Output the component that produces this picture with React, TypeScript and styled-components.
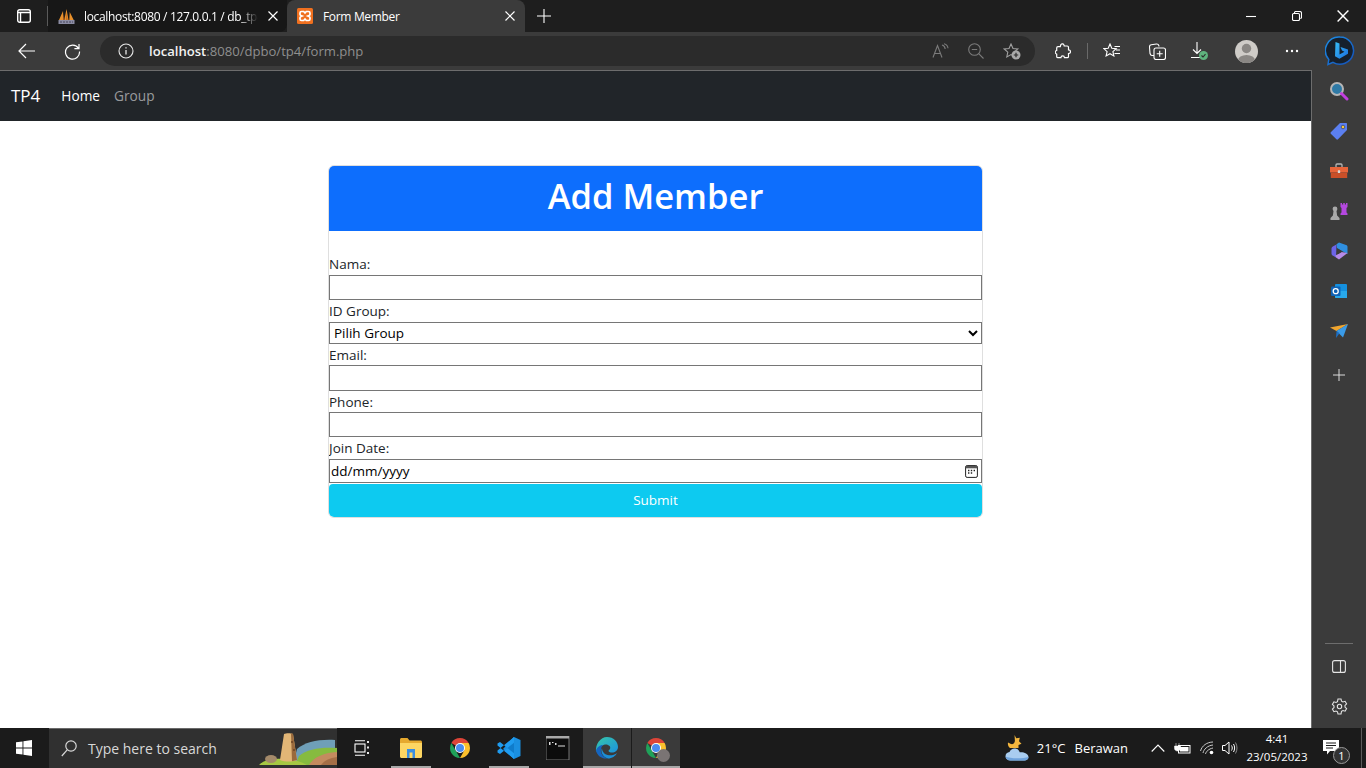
import React from "react";
import styled, { createGlobalStyle } from "styled-components";

const GlobalStyle = createGlobalStyle`
	html, body {
		margin: 0;
		padding: 0;
		height: 100%;
		overflow: hidden;
		background: #1c1c1c;
	}
	* {
		box-sizing: border-box;
	}
	body {
		font-family: "Open Sans", "Noto Sans", "Liberation Sans", sans-serif;
	}
`;

const line = { fill: "none", stroke: "currentColor", strokeWidth: 1.1 };

const PanelIcon = () => (
	<svg width="16" height="16" viewBox="0 0 16 16" {...line} strokeWidth={1.4}>
		<rect x="1.700" y="1.700" width="12.600" height="12.600" rx="2" />
		<path d="M1.700 4.500h12.600M4.500 4.500v9.800" />
	</svg>
);
const PmaIcon = () => (
	<svg width="17" height="17" viewBox="0 0 17 17">
		<path d="M1 12 5 3l.5 9zM6.300 12 8.500 1l2 11zM11.300 12l.4-8 4 8z" fill="#e8912c" />
		<path d="M5 12 6 6l.4 6zM8.300 12 8.500 4l1 8z" fill="#b9601a" />
		<rect x="0.500" y="12" width="16" height="4" fill="#8b8ca3" />
		<path d="M2 14h13" stroke="#44455a" strokeWidth="1" strokeDasharray="2 1" />
	</svg>
);
const XamppIcon = () => (
	<svg width="16" height="16" viewBox="0 0 16 16">
		<rect width="16" height="16" rx="1.500" fill="#f0701f" />
		<path
			d="M4.500 3.500h2.200L8 5l1.300-1.500h2.200c1 0 1.500.6 1.500 1.500v1.200c0 .6-.4 1-1 1.300l-1.200.5 1.200.5c.6.300 1 .7 1 1.300V11c0 .9-.5 1.500-1.500 1.500H9.300L8 11l-1.300 1.500H4.500C3.500 12.500 3 11.900 3 11V9.800c0-.6.4-1 1-1.300L5.200 8 4 7.500c-.6-.3-1-.7-1-1.300V5c0-.9.500-1.500 1.500-1.500z"
			fill="none"
			stroke="#fff"
			strokeWidth="1.700"
		/>
	</svg>
);
const CloseIcon = ({ size = 10 }: { size?: number }) => (
	<svg width={size} height={size} viewBox="0 0 10 10" {...line} strokeWidth={1.2}>
		<path d="M.5.500l9 9M9.500.500l-9 9" />
	</svg>
);
const PlusIcon = ({ size = 14 }: { size?: number }) => (
	<svg width={size} height={size} viewBox="0 0 14 14" {...line}>
		<path d="M7 0v14M0 7h14" />
	</svg>
);
const MinIcon = () => (
	<svg width="10" height="10" viewBox="0 0 10 10" {...line}>
		<path d="M0 5.500h10" />
	</svg>
);
const RestoreIcon = () => (
	<svg width="10" height="10" viewBox="0 0 10 10" {...line}>
		<rect x=".5" y="2.500" width="7" height="7" rx="1.200" />
		<path d="M2.500 2.500V1.700C2.500 1 3 .5 3.700 .5h4.100C8.800.5 9.500 1.200 9.500 2.200v4.100c0 .7-.5 1.200-1.200 1.200" />
	</svg>
);
const BackIcon = () => (
	<svg width="18" height="16" viewBox="0 0 18 16" {...line} strokeWidth={1.2}>
		<path d="M1 8h16M8 1 1 8l7 7" />
	</svg>
);
const RefreshIcon = () => (
	<svg width="17" height="17" viewBox="0 0 17 17" {...line} strokeWidth={1.2}>
		<path d="M14.500 5.500A7 7 0 1 0 15.500 8.500M15 1v4.600h-4.600" />
	</svg>
);
const InfoIcon = () => (
	<svg width="16" height="16" viewBox="0 0 16 16" {...line}>
		<circle cx="8" cy="8" r="7" />
		<path d="M8 7v4.500M8 4.300v1.200" strokeWidth="1.300" />
	</svg>
);
const ReadIcon = () => (
	<svg width="17" height="16" viewBox="0 0 17 16" {...line} stroke="#7b7b7b">
		<path d="M1 14.500 5.500 2.500 10 14.500M2.500 10.500h6M10 2c2 .5 3 2 3.200 4M12 .8c2.200.6 3.800 2.400 4 4.500" />
	</svg>
);
const ZoomOutIcon = () => (
	<svg width="16" height="16" viewBox="0 0 16 16" {...line} stroke="#7b7b7b">
		<circle cx="6.500" cy="6.500" r="5.800" />
		<path d="M3.800 6.500h5.400M10.700 10.700l4.800 4.800" />
	</svg>
);
const StarAddIcon = () => (
	<svg width="18" height="17" viewBox="0 0 18 17">
		<path
			d="M8 1l2 4.500 4.800.5-3.600 3.200 1 4.800L8 11.600 3.800 14l1-4.800L1.200 6 6 5.500z"
			fill="none"
			stroke="#a0a0a0"
			strokeWidth="1.100"
		/>
		<circle cx="13" cy="12" r="4.500" fill="#a9a9a9" />
		<path d="M13 9.800v4.400M10.800 12h4.400" stroke="#2b2b2b" strokeWidth="1.200" />
	</svg>
);
const PuzzleIcon = () => (
	<svg width="16" height="16" viewBox="0 0 16 16" {...line} strokeWidth={1.2}>
		<path d="M6 1.500c.8-1 2.600-.7 3 .7l.2.800h3c.8 0 1.300.5 1.300 1.300v2.500c1.500 0 2 1 2 1.900s-.7 1.800-2 1.800v2.900c0 .8-.5 1.300-1.300 1.300H9.500c-.1-1.300-.8-1.900-1.800-1.900s-1.700.7-1.800 1.900H3c-.8 0-1.300-.5-1.300-1.300v-2.200C.3 10.500 0 9.300.5 8.300c.3-.6.700-.8 1.200-.9V5c0-.8.500-1.300 1.300-1.300h2.300c.1-.9.200-1.600.7-2.200z" />
	</svg>
);
const FavListIcon = () => (
	<svg width="18" height="16" viewBox="0 0 18 16" {...line}>
		<path d="M7 1l1.800 4.200 4.400.4-3.300 3 1 4.400L7 10.700 3.100 13l1-4.400-3.300-3 4.400-.4zM11.500 3.500H17M13 7h4M11.500 10.500H17" />
	</svg>
);
const CollectionsIcon = () => (
	<svg width="17" height="17" viewBox="0 0 17 17" {...line}>
		<path d="M5 12.500H3C1.800 12.500 1.300 11.700 1 10.500L.5 4C.4 2.800 1 2 2.200 1.800L7.500 1c1.200-.1 2 .4 2.300 1.500l.2 1" />
		<rect x="5" y="5" width="11.500" height="11.500" rx="2" />
		<path d="M10.700 7.700v6M7.700 10.700h6" />
	</svg>
);
const DownloadIcon = () => (
	<svg width="18" height="18" viewBox="0 0 18 18">
		<path d="M6 0v11M2 7.500l4 4 4-4M0 15.500h11" fill="none" stroke="#fff" strokeWidth="1.100" />
		<circle cx="12.500" cy="13.500" r="4.500" fill="#5fb37e" />
		<path d="M10.500 13.500l1.500 1.500 2.500-2.800" fill="none" stroke="#2b2b2b" strokeWidth="1.100" />
	</svg>
);
const AvatarIcon = () => (
	<svg width="23" height="23" viewBox="0 0 23 23">
		<defs>
			<clipPath id="avatar-clip">
				<circle cx="11.500" cy="11.500" r="11.500" />
			</clipPath>
		</defs>
		<g clipPath="url(#avatar-clip)">
			<rect width="23" height="23" fill="#cfccc8" />
			<circle cx="11.500" cy="8.500" r="4.700" fill="#8a8784" />
			<ellipse cx="11.500" cy="20.500" rx="8.500" ry="5.500" fill="#8a8784" />
		</g>
	</svg>
);
const MoreIcon = () => (
	<svg width="14" height="4" viewBox="0 0 14 4" fill="#fff">
		<circle cx="2" cy="2" r="1.200" />
		<circle cx="7" cy="2" r="1.200" />
		<circle cx="12" cy="2" r="1.200" />
	</svg>
);
const BingIcon = () => (
	<svg width="30" height="30" viewBox="0 0 30 30">
		<defs>
			<linearGradient id="bing-ring" x1="0" y1="0" x2="1" y2="1">
				<stop offset="0" stopColor="#1c8fe8" />
				<stop offset="1" stopColor="#1450b8" />
			</linearGradient>
			<linearGradient id="bing-b" x1="0" y1="0" x2="1" y2="1">
				<stop offset="0" stopColor="#37bdf5" />
				<stop offset="1" stopColor="#1a6fe0" />
			</linearGradient>
		</defs>
		<path
			d="M15 1a13.600 13.600 0 1 1-7 25.300L3 28.500l.8-5A13.600 13.600 0 0 1 15 1z"
			fill="#16202c"
			stroke="url(#bing-ring)"
			strokeWidth="1.500"
		/>
		<path d="M10.500 6l4 1.400v11l5-2.700-2.500-1.200-1.500-3.600 7.500 2.600v4.300l-8.600 5-4.400-2.500z" fill="url(#bing-b)" />
	</svg>
);

const SearchGem = () => (
	<svg width="20" height="20" viewBox="0 0 20 20">
		<circle cx="8" cy="8" r="6" fill="#2f7aa6" stroke="#b6b6b6" strokeWidth="2" />
		<path d="M12.500 12.500 18 18" stroke="#c23ee0" strokeWidth="3" strokeLinecap="round" />
	</svg>
);
const TagIcon = () => (
	<svg width="18" height="18" viewBox="0 0 18 18">
		<path d="M10 1h6c.6 0 1 .4 1 1v6l-9 9.300c-.5.500-1.100.5-1.600 0L.8 11.800c-.5-.5-.5-1.100 0-1.600z" fill="#5b7ff0" />
		<circle cx="13" cy="5" r="1.800" fill="#f4c93b" stroke="#2d3a70" strokeWidth=".7" />
	</svg>
);
const ToolboxIcon = () => (
	<svg width="18" height="16" viewBox="0 0 18 16">
		<path d="M6 4V2c0-.6.4-1 1-1h4c.6 0 1 .4 1 1v2" fill="none" stroke="#b5b5b5" strokeWidth="1.300" />
		<rect y="4" width="18" height="5.500" fill="#e8653a" />
		<rect x=".8" y="9.500" width="16.400" height="5.500" fill="#c94f28" />
		<rect x="7.800" y="7.300" width="2.400" height="2.800" rx=".6" fill="#d9d9d9" />
	</svg>
);
const ChessIcon = () => (
	<svg width="18" height="18" viewBox="0 0 18 18">
		<path d="M10.500 1h1.500v1.500h1.200V1h1.600v1.500H16V1h1.500v4l-1 1v4.500l1 1V13h-7v-1.500l1-1V6l-1-1z" fill="#b548e0" />
		<circle cx="5" cy="7" r="2.400" fill="#a9a9a9" />
		<path d="M3.500 9h3l.6 4.500L9.500 16v2h-9v-2l2.400-2.500z" fill="#a9a9a9" />
	</svg>
);
const CopilotIcon = () => (
	<svg width="17" height="18" viewBox="0 0 17 18">
		<path d="M8 .5 15 3c1 .4 1.500 1 1.500 2v7L11 9 6 6l-.5-3.700z" fill="#2f8fe0" />
		<path d="M5.500 2.500 1.800 4.500C1 5 .5 5.700.5 6.600v5c0 .9.400 1.600 1.200 2L5 15.500z" fill="#6d63e8" />
		<path d="M16.500 11 8 17.500 5 15.500l-.5-2 6-3.500z" fill="#b58ae8" />
		<path d="M6.500 6.500l5 3-5 3z" fill="#3b3b3b" />
	</svg>
);
const OutlookIcon = () => (
	<svg width="16" height="16" viewBox="0 0 16 16">
		<rect x="4" y="1" width="12" height="14" rx="1" fill="#1490df" />
		<path d="M4 8h12v7H5a1 1 0 0 1-1-1z" fill="#28a8ea" />
		<rect x="0" y="3.500" width="9.500" height="9.500" rx="1" fill="#0f62b5" />
		<circle cx="4.700" cy="8.200" r="2.500" fill="none" stroke="#fff" strokeWidth="1.300" />
	</svg>
);
const SendIcon = () => (
	<svg width="18" height="16" viewBox="0 0 18 16">
		<path d="M0 4.500 18 1 6.500 8z" fill="#f0a52f" />
		<path d="M18 1 13 14.500 6.500 8z" fill="#3a9be8" />
		<path d="M6.500 8 6 15l3.500-4.700z" fill="#1c6fc4" />
	</svg>
);
const SplitIcon = () => (
	<svg width="14" height="13" viewBox="0 0 14 13" {...line}>
		<rect x=".6" y=".6" width="12.800" height="11.800" rx="2" />
		<path d="M8.500.6v11.800" />
	</svg>
);
const GearIcon = () => (
	<svg width="17" height="17" viewBox="0 0 17 17" {...line}>
		<path d="M7 1h3l.5 2.200 1.500.8 2.100-.7 1.500 2.600-1.600 1.500v1.700l1.600 1.500-1.500 2.600-2.100-.7-1.500.8L10 16H7l-.5-2.200-1.500-.8-2.100.7L1.400 11.100 3 9.600V7.900L1.400 6.400l1.500-2.600 2.100.7 1.500-.8z" />
		<circle cx="8.500" cy="8.500" r="2.200" />
	</svg>
);
const CalendarIcon = () => (
	<svg width="13" height="13" viewBox="0 0 13 13">
		<rect x=".6" y=".6" width="11.800" height="11.800" rx="1.500" fill="none" stroke="#222" strokeWidth="1" />
		<rect x="1" y="1" width="11" height="2.300" fill="#555" />
		<path d="M3 5.500h1.400M5.800 5.500h1.400M8.600 5.500H10M3 8h1.400M5.800 8h1.400" stroke="#222" strokeWidth="1.300" />
	</svg>
);

const WindowsIcon = () => (
	<svg width="16" height="16" viewBox="0 0 16 16" fill="#fff">
		<path d="M0 2.300 6.500 1.400v6.100H0zM7.400 1.300 16 0v7.500H7.400zM0 8.500h6.500v6.100L0 13.700zM7.400 8.500H16V16l-8.600-1.300z" />
	</svg>
);
const LensIcon = () => (
	<svg width="16" height="17" viewBox="0 0 16 17" {...line} strokeWidth={1.2}>
		<circle cx="10" cy="6" r="5.200" />
		<path d="M6.200 9.800.8 16" />
	</svg>
);
const SearchArt = () => (
	<svg width="78" height="33" viewBox="0 0 78 33">
		<path d="M38 17c8-7 22-10 38-9v25H34z" fill="#6f9fb8" />
		<path d="M40 24c8-7 22-9 38-8v17H36z" fill="#86bb3f" />
		<path d="M0 33c4-4 10-6 16-6 10-1 24 1 32 6z" fill="#a6c843" />
		<path d="M50 33c4-7 13-12 28-13v13z" fill="#c48b5f" />
		<path d="M62 33c3-4 8-7 16-8v8z" fill="#a56f47" />
		<path d="M25 2c2-1 7-1 9 0l4 26c-5 2-12 2-17 0z" fill="#e2b676" />
		<path d="M32 1.500c1 0 1.500 0 2 .5l4 26-5 1.300z" fill="#9a6a3c" />
		<circle cx="33" cy="10" r="1" fill="#6c4523" />
		<circle cx="35" cy="18" r="1" fill="#6c4523" />
		<ellipse cx="12" cy="27" rx="6" ry="4" fill="#a48a6a" />
	</svg>
);
const TaskViewIcon = () => (
	<svg width="16" height="16" viewBox="0 0 16 16" {...line}>
		<path d="M1 .8h10M1 15.200h10" />
		<rect x="1" y="4" width="10" height="8" />
		<path d="M14 1v2M14 6.500v2M14 12v2" strokeWidth="1.800" />
	</svg>
);
const FolderIcon = () => (
	<svg width="22" height="20" viewBox="0 0 22 20">
		<path d="M0 1.500C0 .7.700 0 1.500 0h6l2 2.500h11c.8 0 1.500.7 1.500 1.500v2H0z" fill="#e6a92e" />
		<path d="M0 5h22v13.500c0 .8-.7 1.500-1.500 1.500h-19C.7 20 0 19.300 0 18.500z" fill="#fdd663" />
		<rect x="7" y="11" width="8" height="9" fill="#3a8ee0" />
		<rect x="9.500" y="14.500" width="3" height="5.500" fill="#fdd663" />
	</svg>
);
const ChromeIcon = ({ size = 24 }: { size?: number }) => (
	<svg width={size} height={size} viewBox="0 0 24 24">
		<path d="M3.340 7A10 10 0 0 1 20.660 7H12a5 5 0 0 0-4.330 2.500z" fill="#dd4438" />
		<path d="M3.340 7 7.670 14.500 12 22A10 10 0 0 1 3.340 7z" fill="#1fa25a" />
		<path d="M20.660 7H12l4.330 7.500L12 22A10 10 0 0 0 20.660 7z" fill="#fbc02d" />
		<circle cx="12" cy="12" r="5" fill="#fff" />
		<circle cx="12" cy="12" r="4" fill="#4a8cf0" />
	</svg>
);
const VsCodeIcon = () => (
	<svg width="24" height="24" viewBox="0 0 24 24">
		<path d="M17 1 23.500 4v16L17 23 6 13z" fill="#1a8fe0" />
		<path d="M17 1v22L10 15.500V8.500z" fill="#0f7ccb" />
		<path d="M.5 7.500 3 6l14 11.200V23L.5 9.500zM.5 16.500 3 18 17 6.800V1L.5 14.500z" fill="#1f9cf0" />
	</svg>
);
const CmdIcon = () => (
	<svg width="24" height="24" viewBox="0 0 24 24">
		<rect x="0" y="0" width="23" height="24" fill="#0c0c0c" stroke="#777" strokeWidth="1" />
		<rect x="0" y="0" width="23" height="2.500" fill="#aaa" />
		<path d="M3 6h1.500v3H3zM6 6h1.500v1H6zM9 7h1.500v2H9zM12 9.500h7v1h-7z" fill="#ddd" />
	</svg>
);
const EdgeIcon = () => (
	<svg width="24" height="24" viewBox="0 0 24 24">
		<defs>
			<linearGradient id="edge-a" x1="0" y1="0" x2="1" y2="1">
				<stop offset="0" stopColor="#37c7a8" />
				<stop offset="1" stopColor="#1b92df" />
			</linearGradient>
		</defs>
		<path
			d="M12 1c6.500 0 11 4.800 11 10 0 3.500-3 5.500-6 5.500-2 0-3.500-.6-3.500-1.500 0-.5.700-.8 1.300-1.700.7-1 .6-2.200-.2-3.300C13.300 8.500 11 8 9 8.800 5.500 10 2.500 13 1 16 .2 8 5.500 1 12 1z"
			fill="url(#edge-a)"
		/>
		<path d="M1 14.500c.7-3 3.800-5.500 7-5.500-2 2-3 5-1.500 8.500 1 2.500 3.500 4.500 6 5C7.500 23.300 2 20 1 14.500z" fill="#1565c0" />
		<path d="M13 22.500c-2.500-.5-5-2.500-6-5-.8-2-.7-4 0-5.500 0 4 3 7 7 7.300 3 .2 6-.5 8-2.300-1.500 3-5 5.500-9 5.500z" fill="#1b8fd8" />
	</svg>
);
const ChromeProfileIcon = () => (
	<ProfileWrap>
		<ChromeIcon />
		<ProfileBadge />
	</ProfileWrap>
);
const WeatherIcon = () => (
	<WeatherWrap>
		<svg width="24" height="26" viewBox="0 0 24 26">
			<path d="M9.500 0l1.800 3.200 3.500-.4-.8 3.400 2.500 2.600-3 1.200V13H5c-1.500-1.200-2.500-3-2-5.500L6 9c1.500.5 3.500-.5 3.800-2.500.3-2-.3-4.500-.3-6.500z" fill="#f3b63e" />
			<path d="M5.500 25.500C2.500 25.500.5 23.500.5 21.200c0-2.300 1.800-4 4-4.200 1-2.500 3.500-4 6-3.500 2.200.4 3.700 2 4.200 3.800 3.500-.6 8.800 1.300 8.800 4.700 0 2.200-2 3.500-4 3.500z" fill="#a9cdf0" />
			<path d="M.5 21.500c.5 2.500 2.500 4 5 4h14c2 0 4-1.300 4-3.500-5 1.500-18 2-23-.5z" fill="#6fa3dc" />
		</svg>
	</WeatherWrap>
);
const ChevronUpIcon = () => (
	<svg width="14" height="8" viewBox="0 0 14 8" {...line}>
		<path d="M.7 7.500 7 1l6.300 6.500" />
	</svg>
);
const BatteryIcon = () => (
	<svg width="17" height="11" viewBox="0 0 17 11">
		<rect x="4.500" y="2.500" width="11.500" height="7.500" fill="none" stroke="#fff" strokeWidth="1" />
		<rect x="6" y="4" width="8.500" height="4.500" fill="#fff" />
		<path d="M2 0v3M5 0v3M.5 3h6v2.500C6.500 7 5 8 3.500 8S.5 7 .5 5.500z" fill="#fff" stroke="#fff" strokeWidth=".5" />
	</svg>
);
const WifiIcon = () => (
	<svg width="14" height="14" viewBox="0 0 14 14" fill="none" stroke="#c8c8c8" strokeWidth="1">
		<path d="M.5 10C2 4.500 7 1.200 13 1M3 12c.6-3.500 4.500-7.500 10-8M5.500 13c.5-2.500 3-5 7.500-6" />
		<circle cx="11.500" cy="11.500" r="1.800" fill="#fff" stroke="none" />
	</svg>
);
const SpeakerIcon = () => (
	<svg width="16" height="14" viewBox="0 0 16 14" {...line} strokeWidth={1}>
		<path d="M.5 4.500h2.500L7 1v12L3 9.500H.5zM9.500 4.500c1 1.500 1 3.500 0 5M11.500 3c1.500 2.500 1.500 5.500 0 8" />
		<path d="M13.500 1.500c2 3.500 2 7.500 0 11" stroke="#8a8a8a" />
	</svg>
);
const NotifyIcon = () => (
	<svg width="16" height="15" viewBox="0 0 16 15">
		<path d="M0 0h16v11H7l-3 3.500V11H0z" fill="#fff" />
		<path d="M3 3h10M3 5.500h10M3 8h7" stroke="#1b1b1b" strokeWidth="1" />
	</svg>
);

const App = () => {
	return (
		<Screen>
			<GlobalStyle />
			<TabStrip>
				<IconSlot $w={47}>
					<PanelIcon />
				</IconSlot>
				<TabDivider />
				<Tab>
					<IconSlot $w={36}>
						<PmaIcon />
					</IconSlot>
					<TabTitle $fade>localhost:8080 / 127.0.0.1 / db_tp4</TabTitle>
					<IconSlot $w={29}>
						<CloseIcon />
					</IconSlot>
				</Tab>
				<Tab $active>
					<IconSlot $w={36}>
						<XamppIcon />
					</IconSlot>
					<TabTitle>Form Member</TabTitle>
					<IconSlot $w={30}>
						<CloseIcon />
					</IconSlot>
				</Tab>
				<IconSlot $w={38}>
					<PlusIcon />
				</IconSlot>
				<Grow />
				<IconSlot $w={46}>
					<MinIcon />
				</IconSlot>
				<IconSlot $w={46}>
					<RestoreIcon />
				</IconSlot>
				<IconSlot $w={46}>
					<CloseIcon size={12} />
				</IconSlot>
			</TabStrip>

			<Toolbar>
				<IconSlot $w={44}>
					<BackIcon />
				</IconSlot>
				<IconSlot $w={46}>
					<RefreshIcon />
				</IconSlot>
				<AddressBar>
					<InfoSlot>
						<InfoIcon />
					</InfoSlot>
					<Url>
						<b>localhost</b>:8080/dpbo/tp4/form.php
					</Url>
					<Grow />
					<IconSlot $w={36}>
						<ReadIcon />
					</IconSlot>
					<IconSlot $w={36}>
						<ZoomOutIcon />
					</IconSlot>
					<IconSlot $w={36}>
						<StarAddIcon />
					</IconSlot>
				</AddressBar>
				<IconSlot $w={44}>
					<PuzzleIcon />
				</IconSlot>
				<ToolDivider />
				<IconSlot $w={48}>
					<FavListIcon />
				</IconSlot>
				<IconSlot $w={42}>
					<CollectionsIcon />
				</IconSlot>
				<IconSlot $w={44}>
					<DownloadIcon />
				</IconSlot>
				<IconSlot $w={48}>
					<AvatarIcon />
				</IconSlot>
				<IconSlot $w={44}>
					<MoreIcon />
				</IconSlot>
				<IconSlot $w={52}>
					<BingIcon />
				</IconSlot>
			</Toolbar>

			<Body>
				<Page>
					<Navbar>
						<Brand>TP4</Brand>
						<NavLink $active>Home</NavLink>
						<NavLink>Group</NavLink>
					</Navbar>
					<Card>
						<CardHeader>Add Member</CardHeader>
						<Form onSubmit={(e) => e.preventDefault()}>
							<Label $h={22}>Nama:</Label>
							<TextInput type="text" $h={25} />
							<Label $h={22}>ID Group:</Label>
							<GroupSelect defaultValue="">
								<option value="">Pilih Group</option>
							</GroupSelect>
							<Label $h={21} $low>
								Email:
							</Label>
							<TextInput type="email" $h={26} />
							<Label $h={21} $low>
								Phone:
							</Label>
							<TextInput type="text" $h={25} />
							<Label $h={22}>Join Date:</Label>
							<DateBox>
								<DateInput type="text" placeholder="dd/mm/yyyy" />
								<CalendarIcon />
							</DateBox>
							<SubmitButton type="submit">Submit</SubmitButton>
						</Form>
					</Card>
				</Page>
				<Sidebar>
					<SideSlot>
						<SearchGem />
					</SideSlot>
					<SideSlot>
						<TagIcon />
					</SideSlot>
					<SideSlot>
						<ToolboxIcon />
					</SideSlot>
					<SideSlot>
						<ChessIcon />
					</SideSlot>
					<SideSlot>
						<CopilotIcon />
					</SideSlot>
					<SideSlot>
						<OutlookIcon />
					</SideSlot>
					<SideSlot>
						<SendIcon />
					</SideSlot>
					<SideSlot $plus>
						<PlusIcon size={12} />
					</SideSlot>
					<Grow />
					<SideDivider />
					<SideSlot>
						<SplitIcon />
					</SideSlot>
					<SideSlot>
						<GearIcon />
					</SideSlot>
				</Sidebar>
			</Body>

			<Taskbar>
				<IconSlot $w={48}>
					<WindowsIcon />
				</IconSlot>
				<SearchBox>
					<LensIcon />
					<SearchText>Type here to search</SearchText>
					<Grow />
					<SearchArt />
				</SearchBox>
				<TaskButton $w={49}>
					<TaskViewIcon />
				</TaskButton>
				<TaskButton $open>
					<FolderIcon />
				</TaskButton>
				<TaskButton>
					<ChromeIcon />
				</TaskButton>
				<TaskButton $open>
					<VsCodeIcon />
				</TaskButton>
				<TaskButton>
					<CmdIcon />
				</TaskButton>
				<TaskButton $open $active>
					<EdgeIcon />
				</TaskButton>
				<TaskButton $open $active>
					<ChromeProfileIcon />
				</TaskButton>
				<Grow />
				<WeatherIcon />
				<Temp>21°C</Temp>
				<WeatherText>Berawan</WeatherText>
				<IconSlot $w={24}>
					<ChevronUpIcon />
				</IconSlot>
				<IconSlot $w={24}>
					<BatteryIcon />
				</IconSlot>
				<IconSlot $w={25}>
					<WifiIcon />
				</IconSlot>
				<IconSlot $w={22}>
					<SpeakerIcon />
				</IconSlot>
				<Clock>
					<span>4:41</span>
					<span>23/05/2023</span>
				</Clock>
				<NotifySlot>
					<NotifyIcon />
					<NotifyBadge>1</NotifyBadge>
				</NotifySlot>
				<ShowDesktop />
			</Taskbar>
		</Screen>
	);
};

export default App;

const Screen = styled.div`
	display: flex;
	flex-direction: column;
	width: 1366px;
	height: 768px;
	overflow: hidden;
	background: #3b3b3b;
`;

const Grow = styled.div`
	flex: 1;
`;

const IconSlot = styled.div<{ $w: number }>`
	display: flex;
	flex: none;
	align-items: center;
	justify-content: center;
	width: ${({ $w }) => $w}px;
	height: 100%;
	color: #fff;
`;

const TabStrip = styled.div`
	display: flex;
	align-items: stretch;
	height: 32px;
	background: #1e1e1e;
`;

const TabDivider = styled.div`
	flex: none;
	width: 1px;
	height: 20px;
	margin-top: 6px;
	background: #5a5a5a;
`;

const Tab = styled.div<{ $active?: boolean }>`
	display: flex;
	flex: none;
	align-items: center;
	width: ${({ $active }) => ($active ? "238px" : "239px")};
	color: #fff;
	background: ${({ $active }) => ($active ? "#3b3b3b" : "#171717")};
	border-radius: ${({ $active }) => ($active ? "8px 8px 0 0" : "0 0 8px 0")};
`;

const TabTitle = styled.div<{ $fade?: boolean }>`
	flex: 1;
	overflow: hidden;
	font-size: 12px;
	letter-spacing: -0.33px;
	white-space: nowrap;
	${({ $fade }) =>
		$fade &&
		`
		-webkit-mask-image: linear-gradient(to right, #000 90%, transparent 100%);
		mask-image: linear-gradient(to right, #000 90%, transparent 100%);
	`}
`;

const Toolbar = styled.div`
	display: flex;
	align-items: center;
	height: 38px;
	padding-left: 5px;
	background: #3b3b3b;
`;

const AddressBar = styled.div`
	display: flex;
	flex: none;
	align-items: center;
	width: 935px;
	height: 30px;
	margin: 0 6px 0 5px;
	padding-right: 5px;
	border-radius: 15px;
	background: #2b2b2b;
`;

const InfoSlot = styled.div`
	display: flex;
	flex: none;
	justify-content: center;
	width: 49px;
	padding-left: 2px;
	color: #e8e8e8;
`;

const Url = styled.div`
	font-size: 13.100px;
	color: #8f8f8f;
	white-space: nowrap;

	b {
		font-weight: 600;
		color: #f2f2f2;
	}
`;

const ToolDivider = styled.div`
	flex: none;
	width: 1px;
	height: 16px;
	margin-left: 2px;
	background: #6a6a6a;
`;

const Body = styled.div`
	display: flex;
	flex: 1;
	min-height: 0;
`;

const Page = styled.div`
	flex: none;
	width: 1311px;
	border-top: 1px solid #6d6d6d;
	background: #fff;
`;

const Navbar = styled.nav`
	display: flex;
	align-items: center;
	height: 50px;
	padding: 0 0 2px 11px;
	background: #212529;
`;

const Brand = styled.div`
	margin-right: 21px;
	font-size: 17px;
	color: #fff;
`;

const NavLink = styled.a<{ $active?: boolean }>`
	margin-right: 14px;
	font-size: 13.700px;
	color: ${({ $active }) => ($active ? "#fff" : "rgba(255, 255, 255, 0.55)")};
`;

const Card = styled.div`
	width: 655px;
	margin: 44px auto 0;
	border: 1px solid rgba(0, 0, 0, 0.125);
	border-radius: 6px;
	overflow: hidden;
`;

const CardHeader = styled.h1`
	display: flex;
	align-items: center;
	justify-content: center;
	height: 65px;
	margin: 0;
	padding-bottom: 7px;
	font-size: 34.500px;
	font-weight: 600;
	color: #fff;
	background: #0d6efd;
`;

const Form = styled.form`
	display: flex;
	flex-direction: column;
	padding-top: 22px;
`;

const Label = styled.label<{ $h: number; $low?: boolean }>`
	display: block;
	height: ${({ $h }) => $h}px;
	padding-top: ${({ $low }) => ($low ? "1px" : "0")};
	font-size: 13.500px;
	line-height: ${({ $h }) => $h}px;
	color: #212529;
`;

const fieldBorder = "1px solid #767676";

const TextInput = styled.input<{ $h: number }>`
	display: block;
	width: 100%;
	height: ${({ $h }) => $h}px;
	padding: 0 2px;
	font: inherit;
	border: ${fieldBorder};
	border-radius: 0;
	background: #fff;
`;

const GroupSelect = styled.select`
	display: block;
	width: 100%;
	height: 22px;
	padding: 0;
	font-family: inherit;
	font-size: 13.500px;
	color: #000;
	border: ${fieldBorder};
	border-radius: 0;
	background-color: #fff;
`;

const DateBox = styled.div`
	display: flex;
	align-items: center;
	height: 24px;
	padding-right: 3px;
	border: ${fieldBorder};
`;

const DateInput = styled.input`
	flex: 1;
	min-width: 0;
	height: 100%;
	padding: 0 1px;
	font-family: inherit;
	font-size: 13.500px;
	color: #000;
	border: none;
	outline: none;
	background: transparent;

	&::placeholder {
		color: #000;
		opacity: 1;
	}
`;

const SubmitButton = styled.button`
	display: block;
	width: 100%;
	height: 33px;
	margin-top: 1px;
	padding: 0 0 2px;
	font-family: inherit;
	font-size: 13.500px;
	color: #fff;
	border: none;
	border-radius: 4px;
	background: #0dcaf0;
`;

const Sidebar = styled.div`
	display: flex;
	flex: none;
	flex-direction: column;
	width: 55px;
	padding: 1px 0 2px;
	border-left: 1px solid #6d6d6d;
	background: #3b3b3b;
`;

const SideSlot = styled.div<{ $plus?: boolean }>`
	display: flex;
	flex: none;
	align-items: center;
	justify-content: center;
	height: 40px;
	margin-top: ${({ $plus }) => ($plus ? "4px" : "0")};
	color: #e4e4e4;
`;

const SideDivider = styled.div`
	flex: none;
	width: 28px;
	height: 1px;
	margin: 0 auto 2px;
	background: #6d6d6d;
`;

const Taskbar = styled.div`
	display: flex;
	flex: none;
	align-items: stretch;
	height: 40px;
	color: #fff;
	background: #1b1b1b;
`;

const SearchBox = styled.div`
	display: flex;
	flex: none;
	align-items: center;
	overflow: hidden;
	width: 288px;
	margin-left: 1px;
	padding-left: 12px;
	color: #d8d8d8;
	border-top: 1px solid #6a6a6a;
	background: #303030;
`;

const SearchText = styled.span`
	margin-left: 11px;
	font-size: 14px;
	white-space: nowrap;
`;

const TaskButton = styled.div<{ $w?: number; $open?: boolean; $active?: boolean }>`
	position: relative;
	display: flex;
	flex: none;
	align-items: center;
	justify-content: center;
	width: ${({ $w }) => $w ?? 48}px;
	margin-right: 1px;
	color: #fff;
	background: ${({ $active }) => ($active ? "#3a3a3a" : "transparent")};

	&::after {
		content: "";
		display: ${({ $open }) => ($open ? "block" : "none")};
		position: absolute;
		bottom: 0;
		left: ${({ $active }) => ($active ? "0" : "4px")};
		right: ${({ $active }) => ($active ? "0" : "4px")};
		height: 2px;
		background: #a8a8a8;
	}
`;

const ProfileWrap = styled.div`
	position: relative;
	width: 24px;
	height: 24px;
`;

const ProfileBadge = styled.div`
	position: absolute;
	right: -2px;
	bottom: -2px;
	width: 13px;
	height: 13px;
	border-radius: 50%;
	background: #7a7474;
`;

const WeatherWrap = styled.div`
	display: flex;
	flex: none;
	align-items: center;
	height: 100%;
	padding-bottom: 1px;
`;

const Temp = styled.span`
	align-self: center;
	margin-left: 8px;
	font-size: 13px;
	white-space: nowrap;
`;

const WeatherText = styled.span`
	align-self: center;
	margin: 0 18px 0 9px;
	font-size: 13px;
	white-space: nowrap;
`;

const Clock = styled.div`
	display: flex;
	flex: none;
	flex-direction: column;
	align-items: center;
	justify-content: center;
	gap: 2px;
	width: 72px;
	padding-bottom: 1px;
	font-size: 11.500px;
	line-height: 16px;
`;

const NotifySlot = styled.div`
	position: relative;
	display: flex;
	flex: none;
	align-items: center;
	justify-content: center;
	width: 38px;
	padding-right: 2px;
	padding-bottom: 2px;
`;

const NotifyBadge = styled.div`
	position: absolute;
	left: 20px;
	top: 19px;
	display: flex;
	align-items: center;
	justify-content: center;
	width: 17px;
	height: 17px;
	font-size: 11px;
	color: #fff;
	border: 1px solid #9a9a9a;
	border-radius: 50%;
	background: #333;
`;

const ShowDesktop = styled.div`
	flex: none;
	width: 1px;
	margin: 0 4px 0 10px;
	background: #5a5a5a;
`;
